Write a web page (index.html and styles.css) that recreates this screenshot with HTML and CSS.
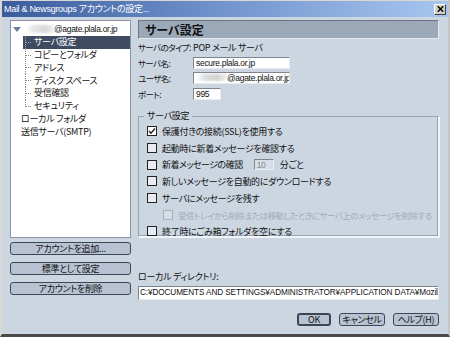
FILE: index.html
```html
<!DOCTYPE html>
<html lang="ja">
<head>
<meta charset="utf-8">
<link rel="stylesheet" href="styles.css">
</head>
<body>
<div class="window">
  <div class="titlebar">
    <span class="title">Mail &amp; Newsgroups アカウントの設定...</span>
    <span class="close"><svg width="7" height="6" viewBox="0 0 7 6"><path d="M0.8 0.3 L6.2 5.7 M6.2 0.3 L0.8 5.7" stroke="#000" stroke-width="1.5"/></svg></span>
  </div>
  <div class="content">
    <div class="leftcol">
      <div class="tree">
        <div class="trow account"><span class="twisty"></span><span class="blur"></span><span class="latin">@agate.plala.or.jp</span></div>
        <div class="trow child selected"><span class="branch"></span><span class="lbl">サーバ設定</span></div>
        <div class="trow child"><span class="branch"></span><span class="lbl">コピーとフォルダ</span></div>
        <div class="trow child"><span class="branch"></span><span class="lbl">アドレス</span></div>
        <div class="trow child"><span class="branch"></span><span class="lbl">ディスク スペース</span></div>
        <div class="trow child"><span class="branch"></span><span class="lbl">受信確認</span></div>
        <div class="trow child last"><span class="branch"></span><span class="lbl">セキュリティ</span></div>
        <div class="trow top">ローカル フォルダ</div>
        <div class="trow top">送信サーバ(SMTP)</div>
      </div>
      <div class="leftbtns">
        <div class="btn">アカウントを追加...</div>
        <div class="btn">標準として設定</div>
        <div class="btn">アカウントを削除</div>
      </div>
    </div>
    <div class="rightcol">
      <div class="header">サーバ設定</div>
      <div class="form">
        <div class="frow"><span class="flabel">サーバのタイプ:</span><span>POP メール サーバ</span></div>
        <div class="frow"><span class="flabel">サーバ名:</span><span class="input wide">secure.plala.or.jp</span></div>
        <div class="frow"><span class="flabel">ユーザ名:</span><span class="input wide"><span class="blur2"></span>@agate.plala.or.jp</span></div>
        <div class="frow"><span class="flabel">ポート:</span><span class="input port">995</span></div>
      </div>
      <fieldset class="group">
        <legend>サーバ設定</legend>
        <div class="cb"><span class="box checked"><svg width="8" height="8" viewBox="0 0 8 8"><path d="M1 4 L3 6.2 L7 1.5" fill="none" stroke="#222" stroke-width="1.4"/></svg></span>保護付きの接続(SSL)を使用する</div>
        <div class="cb"><span class="box"></span>起動時に新着メッセージを確認する</div>
        <div class="cb"><span class="box"></span><span class="tight">新着メッセージの確認</span><span class="input mini">10</span>分ごと</div>
        <div class="cb"><span class="box"></span>新しいメッセージを自動的にダウンロードする</div>
        <div class="cb"><span class="box"></span>サーバにメッセージを残す</div>
        <div class="cb sub disabled"><span class="box"></span>受信トレイから削除または移動したときにサーバ上のメッセージを削除する</div>
        <div class="cb"><span class="box"></span>終了時にごみ箱フォルダを空にする</div>
      </fieldset>
      <div class="localdir">
        <div class="dlabel">ローカル ディレクトリ:</div>
        <div class="input path">C:¥DOCUMENTS AND SETTINGS¥ADMINISTRATOR¥APPLICATION DATA¥Mozilla¥Profiles</div>
      </div>
      <div class="bottombtns">
        <div class="btn ok">OK</div>
        <div class="btn">キャンセル</div>
        <div class="btn">ヘルプ(H)</div>
      </div>
    </div>
  </div>
</div>
</body>
</html>
```

FILE: styles.css
```css
html, body {
  margin: 0;
  padding: 0;
  width: 450px;
  height: 337px;
  overflow: hidden;
  background: #cbd6e1;
}
body {
  font-family: "Noto Sans CJK JP", "Liberation Sans", sans-serif;
  font-size: 9px;
  letter-spacing: -0.3px;
  font-feature-settings: "palt";
  color: #111;
}
.window {
  width: 450px;
  height: 337px;
  box-sizing: border-box;
  border-left: 2px solid #d8d8d4;
  border-right: 2px solid #c6c6c2;
  border-bottom: 3px solid #4a4a4a;
  background: #cbd6e1;
  display: flex;
  flex-direction: column;
}
.titlebar {
  height: 17px;
  flex: none;
  display: flex;
  align-items: center;
  padding: 0 2px 0 2px;
  background: linear-gradient(to right, #3a5c9c 0%, #6d8fc9 45%, #a8c6f0 100%);
  border-top: 1px solid #d8d8d4;
  box-sizing: border-box;
}
.title {
  flex: 1;
  color: #fff;
  font-family: "Liberation Sans", "Noto Sans CJK JP", sans-serif;
  font-size: 9px;
  line-height: 12px;
  letter-spacing: -0.3px;
}
.close {
  width: 12px;
  height: 11px;
  background: #d4d0c8;
  border: 1px solid;
  border-color: #fff #404040 #404040 #fff;
  box-sizing: border-box;
  display: flex;
  align-items: center;
  justify-content: center;
}
.content {
  flex: 1;
  display: flex;
  gap: 7px;
  padding: 3px 8px 0 8px;
  min-height: 0;
}
.leftcol {
  width: 121px;
  flex: none;
  display: flex;
  flex-direction: column;
}
.tree {
  height: 218px;
  flex: none;
  background: #fff;
  border: 1px solid #8a96a6;
  box-sizing: border-box;
  padding-top: 2px;
}
.trow {
  height: 12.8px;
  line-height: 12px;
  white-space: nowrap;
  display: flex;
  align-items: center;
  position: relative;
}
.account { padding-left: 2px; }
.latin { font-family: "Liberation Sans", sans-serif; font-size: 8.5px; letter-spacing: -0.3px; }
.twisty {
  width: 0; height: 0;
  border-left: 4px solid transparent;
  border-right: 4px solid transparent;
  border-top: 5px solid #6b7fa0;
  margin-right: 5px;
}
.blur {
  width: 28px;
  height: 8px;
  background: linear-gradient(to right, #fff, #e4e4e4 30%, #d8d8d8 70%, #f0f0f0);
  filter: blur(1px);
}
.child { padding-left: 14px; }
.branch {
  width: 6px;
  height: 13px;
  border-left: 1px dotted #888;
  position: relative;
  flex: none;
}
.branch::after {
  content: "";
  position: absolute;
  left: 0;
  top: 6px;
  width: 5px;
  border-top: 1px dotted #888;
}
.last .branch { height: 7px; align-self: flex-start; }
.lbl { padding: 0 2px; }
.selected { background: #3f4b60; color: #fff; margin-left: 12px; padding-left: 2px; }
.selected .branch { border-color: #aaa; }
.selected .branch::after { border-color: #aaa; }
.top { padding-left: 10px; }
.leftbtns {
  display: flex;
  flex-direction: column;
  gap: 7px;
  margin-top: 4px;
}
.btn {
  height: 13px;
  box-sizing: border-box;
  border: 1px solid #3d4656;
  border-radius: 3px;
  background: #b8c2d2;
  text-align: center;
  line-height: 11px;
  font-size: 9px;
  white-space: nowrap;
}
.rightcol {
  flex: 1;
  min-width: 0;
  display: flex;
  flex-direction: column;
}
.header {
  height: 19px;
  flex: none;
  box-sizing: border-box;
  background: #9ba8b8;
  border: 1px solid;
  border-color: #6b7584 #e4eaf0 #e4eaf0 #6b7584;
  font-weight: bold;
  font-size: 12px;
  letter-spacing: 0;
  line-height: 17px;
  padding-left: 6px;
  margin-right: 1px;
}
.form {
  margin-top: 2px;
  display: flex;
  flex-direction: column;
  gap: 3px;
}
.frow {
  display: flex;
  align-items: center;
  height: 12.5px;
  white-space: nowrap;
}
.flabel { width: 55px; flex: none; font-size: 8.5px; letter-spacing: -0.6px; }
.input {
  background: #fff;
  border: 1px solid;
  border-color: #7d858f #e8ecf0 #e8ecf0 #7d858f;
  box-sizing: border-box;
  height: 12px;
  line-height: 10px;
  padding-left: 2px;
  font-family: "Liberation Sans", sans-serif;
  font-size: 8.5px;
  letter-spacing: -0.3px;
  white-space: nowrap;
  overflow: hidden;
}
.wide { width: 97px; }
.port { width: 28px; }
.blur2 {
  display: inline-block;
  width: 30px;
  height: 7px;
  margin-right: 1px;
  background: linear-gradient(to right, #fff, #dedede 30%, #d2d2d2 70%, #eeeeee);
  filter: blur(1px);
}
.group {
  margin: 10px 1px 0 0;
  padding: 0 0 3px 8px;
  border: 1px solid;
  border-color: #98a4b2 #f2f5f8 #f2f5f8 #98a4b2;
  box-shadow: inset -1px -1px 0 #98a4b2, 1px 1px 0 #f2f5f8;
  min-width: 0;
  height: 127px;
  flex: none;
  box-sizing: border-box;
  display: flex;
  flex-direction: column;
}
legend {
  padding: 0 3px;
  margin-left: -3px;
  font-size: 9px;
  line-height: 12px;
}
.cb {
  height: 16.7px;
  flex: none;
  display: flex;
  align-items: center;
  white-space: nowrap;
}
.cb:first-of-type { margin-top: 1px; }
.box {
  width: 10px;
  height: 10px;
  box-sizing: border-box;
  border: 1px solid #222;
  background: #e8ecf2;
  margin-right: 5px;
  display: flex;
  align-items: center;
  justify-content: center;
  flex: none;
}
.box.checked { background: #fff; }
.sub { padding-left: 16px; }
.disabled { color: #a2abb6; font-size: 8.5px; letter-spacing: -0.5px; }
.disabled .box { border-color: #a8b0ba; background: #d6dee8; }
.tight { letter-spacing: -0.5px; }
.mini {
  width: 20px;
  height: 11px;
  margin: 0 6px 0 11px;
  color: #888;
  background: #d8dfe8;
}
.localdir { margin-top: 34px; }
.dlabel { height: 12px; line-height: 12px; }
.input.path {
  margin-top: 3px;
  height: 14px;
  line-height: 12px;
  font-size: 8.2px;
  letter-spacing: -0.1px;
  padding-left: 1px;
  margin-right: 1px;
}
.bottombtns {
  display: flex;
  justify-content: flex-end;
  gap: 8px;
  margin-top: 13px;
  padding-right: 1px;
}
.bottombtns .btn { width: 46px; }
.bottombtns .btn.ok { width: 34px; border-width: 2px; line-height: 9px; }
```
